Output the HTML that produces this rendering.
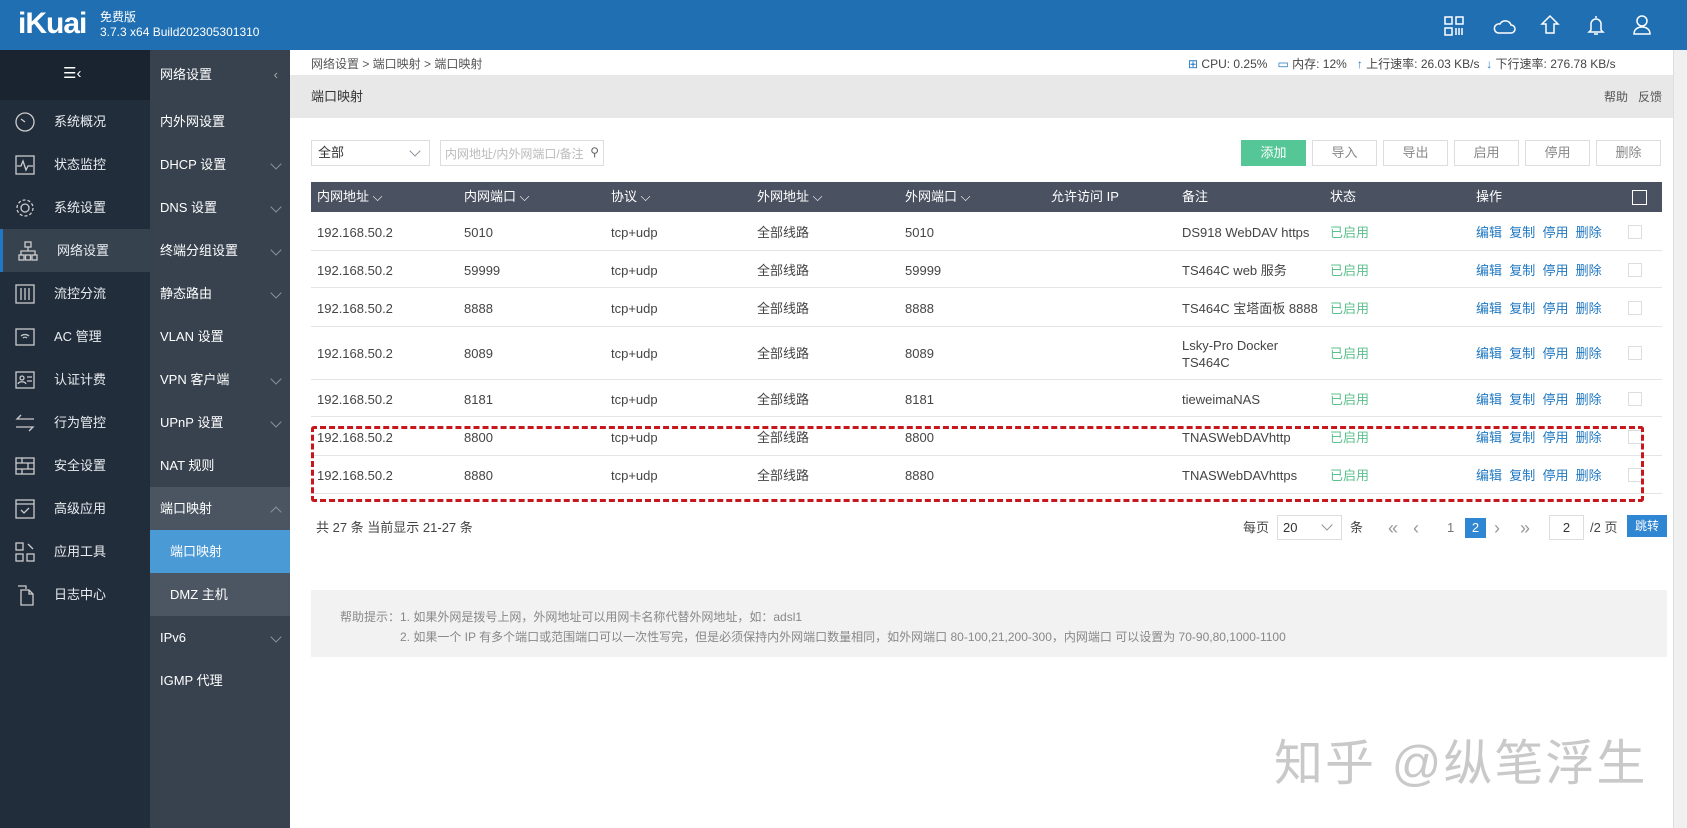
<!DOCTYPE html>
<html><head><meta charset="utf-8"><style>
*{margin:0;padding:0;box-sizing:border-box}
body{width:1687px;height:828px;overflow:hidden;font-family:"Liberation Sans","Noto Sans CJK SC",sans-serif;font-size:13px;line-height:16px;color:#333;background:#fff;position:relative}
.a{position:absolute;white-space:nowrap}
#hd{left:0;top:0;width:1687px;height:50px;background:#1f6fb2;color:#fff}
#s1{left:0;top:50px;width:150px;height:778px;background:#222d3b}
#s2{left:150px;top:50px;width:140px;height:778px;background:#38424e}
.i1{position:absolute;left:0;width:150px;height:43px;color:#e8ecf0;font-size:13px;line-height:43px;padding-left:54px}
.i1 svg{position:absolute;left:14px;top:11px}
.i2{position:absolute;left:0;width:140px;height:43px;color:#fff;font-size:13px;line-height:43px;padding-left:10px}
.chev{position:absolute;right:10px;top:17px;width:8px;height:8px;border-right:1px solid #8a939d;border-bottom:1px solid #8a939d;transform:rotate(45deg)}
.btn{position:absolute;top:140px;width:65px;height:26px;border:1px solid #ddd;background:#fff;color:#888;text-align:center;line-height:24px}
.th{position:absolute;top:182px;height:30px;line-height:30px;color:#fff;font-size:13px}
.row{position:absolute;left:311px;width:1351px;border-bottom:1px solid #e4e4e4}
.c{position:absolute;font-size:13px;line-height:16px;color:#444}
.g{color:#5cc08c}.b{color:#1f78c1}
.cb{position:absolute;left:1628px;width:14px;height:14px;border:1px solid #ddd;background:#fff}
</style></head><body>
<div class="a" id="hd">
 <div class="a" style="left:18px;top:6px;font-size:30px;line-height:36px;font-weight:bold;letter-spacing:-1px">iKuai</div>
 <div class="a" style="left:100px;top:10px;font-size:12px;line-height:15px">免费版<br>3.7.3 x64 Build202305301310</div>
 <svg class="a" style="left:1444px;top:16px" width="20" height="20" fill="none" stroke="#fff" stroke-width="1.5"><rect x="1" y="1" width="7" height="7"/><rect x="12" y="1" width="7" height="7"/><rect x="1" y="12" width="7" height="7"/><path d="M12 12v7M15 12v7M18 12v7"/></svg>
 <svg class="a" style="left:1492px;top:16px" width="24" height="20" fill="none" stroke="#fff" stroke-width="1.5"><path d="M6 17h13a4 4 0 0 0 0-8 6 6 0 0 0-11-1 4.5 4.5 0 0 0-2 9z"/></svg>
 <svg class="a" style="left:1540px;top:14px" width="20" height="22" fill="none" stroke="#fff" stroke-width="1.5"><path d="M10 2L2 10h4v9h8v-9h4z"/></svg>
 <svg class="a" style="left:1586px;top:14px" width="20" height="22" fill="none" stroke="#fff" stroke-width="1.5"><path d="M10 2v2M5 16V10a5 5 0 0 1 10 0v6l2 2H3zM8 20h4"/></svg>
 <svg class="a" style="left:1632px;top:14px" width="20" height="22" fill="none" stroke="#fff" stroke-width="1.5"><circle cx="10" cy="7" r="5"/><path d="M2 20c0-5 4-7 8-7s8 2 8 7z"/></svg>
</div>
<div class="a" id="s1">
 <div class="a" style="left:0;top:0;width:150px;height:50px;background:#1a2430"></div>
 <div class="a" style="left:63px;top:15px;color:#fff;font-size:15px;line-height:18px">☰‹</div>
 <div class="i1" style="top:50px"><svg width="22" height="22" fill="none" stroke="#ccc" stroke-width="1.3"><circle cx="11" cy="11" r="9"/><path d="M11 11l-4 -3"/></svg>系统概况</div>
 <div class="i1" style="top:93px"><svg width="22" height="22" fill="none" stroke="#ccc" stroke-width="1.3"><rect x="2" y="2" width="18" height="18"/><path d="M3 12h4l2-5 3 9 2-4h5"/></svg>状态监控</div>
 <div class="i1" style="top:136px"><svg width="22" height="22" fill="none" stroke="#ccc" stroke-width="1.3"><circle cx="11" cy="11" r="4"/><circle cx="11" cy="11" r="8" stroke-dasharray="3 2"/></svg>系统设置</div>
 <div class="i1" style="top:179px;background:#37424f;border-left:3px solid #1f78c1"><svg width="22" height="22" fill="none" stroke="#ccc" stroke-width="1.3"><rect x="8" y="2" width="6" height="5"/><rect x="2" y="15" width="5" height="5"/><rect x="8.5" y="15" width="5" height="5"/><rect x="15" y="15" width="5" height="5"/><path d="M11 7v4M4 15v-4h14v4"/></svg>网络设置</div>
 <div class="i1" style="top:222px"><svg width="22" height="22" fill="none" stroke="#ccc" stroke-width="1.3"><rect x="2" y="2" width="18" height="18"/><path d="M7 5v12M11 5v12M15 5v12"/></svg>流控分流</div>
 <div class="i1" style="top:265px"><svg width="22" height="22" fill="none" stroke="#ccc" stroke-width="1.3"><rect x="2" y="3" width="18" height="16"/><path d="M7 10a6 6 0 0 1 8 0M9 12a3 3 0 0 1 4 0"/></svg>AC 管理</div>
 <div class="i1" style="top:308px"><svg width="22" height="22" fill="none" stroke="#ccc" stroke-width="1.3"><rect x="2" y="3" width="18" height="16"/><circle cx="8" cy="9" r="2"/><path d="M4 15c1-3 7-3 8 0M13 8h5M13 12h5"/></svg>认证计费</div>
 <div class="i1" style="top:351px"><svg width="22" height="22" fill="none" stroke="#ccc" stroke-width="1.3"><path d="M20 7H3l4-4M2 15h17l-4 4"/></svg>行为管控</div>
 <div class="i1" style="top:394px"><svg width="22" height="22" fill="none" stroke="#ccc" stroke-width="1.3"><rect x="2" y="3" width="18" height="16"/><path d="M2 8h18M2 14h18M8 3v5M14 8v6M8 14v5"/></svg>安全设置</div>
 <div class="i1" style="top:437px"><svg width="22" height="22" fill="none" stroke="#ccc" stroke-width="1.3"><rect x="2" y="2" width="18" height="18"/><path d="M2 6h18M7 12l3 3 5-5"/></svg>高级应用</div>
 <div class="i1" style="top:480px"><svg width="22" height="22" fill="none" stroke="#ccc" stroke-width="1.3"><rect x="2" y="2" width="7" height="7"/><rect x="2" y="13" width="7" height="7"/><rect x="13" y="13" width="7" height="7"/><path d="M14 3l5 5"/></svg>应用工具</div>
 <div class="i1" style="top:523px"><svg width="22" height="22" fill="none" stroke="#ccc" stroke-width="1.3"><path d="M4 2h8v3M7 6h8l4 4v11H7zM15 6v4h4"/></svg>日志中心</div>
</div>
<div class="a" id="s2">
 <div class="i2" style="top:0;height:50px;line-height:50px">网络设置<span style="position:absolute;right:12px;color:#aaa">‹</span></div>
 <div class="i2" style="top:50px">内外网设置</div>
 <div class="i2" style="top:93px">DHCP 设置<i class="chev"></i></div>
 <div class="i2" style="top:136px">DNS 设置<i class="chev"></i></div>
 <div class="i2" style="top:179px">终端分组设置<i class="chev"></i></div>
 <div class="i2" style="top:222px">静态路由<i class="chev"></i></div>
 <div class="i2" style="top:265px">VLAN 设置</div>
 <div class="i2" style="top:308px">VPN 客户端<i class="chev"></i></div>
 <div class="i2" style="top:351px">UPnP 设置<i class="chev"></i></div>
 <div class="i2" style="top:394px">NAT 规则</div>
 <div class="i2" style="top:437px;background:#4b5561">端口映射<i class="chev" style="transform:rotate(-135deg);top:21px"></i></div>
 <div class="i2" style="top:480px;background:#4a9ad6;padding-left:20px">端口映射</div>
 <div class="i2" style="top:523px;background:#4c5662;padding-left:20px">DMZ 主机</div>
 <div class="i2" style="top:566px">IPv6<i class="chev"></i></div>
 <div class="i2" style="top:609px">IGMP 代理</div>
</div>
<div class="a" style="left:1673px;top:50px;width:14px;height:778px;background:#f0f0f0;border-left:1px solid #ddd"></div>
<div class="a" style="left:311px;top:56px;font-size:12px;color:#555">网络设置 &gt; 端口映射 &gt; 端口映射</div>
<div class="a" style="left:1188px;top:56px;font-size:12px;color:#444"><span style="color:#1f78c1">⊞</span> CPU: 0.25% &nbsp; <span style="color:#1f78c1">▭</span> 内存: 12% &nbsp; <span style="color:#1f78c1">↑</span> 上行速率: 26.03 KB/s &nbsp;<span style="color:#1f78c1">↓</span> 下行速率: 276.78 KB/s</div>
<div class="a" style="left:290px;top:75px;width:1383px;height:43px;background:#e8e8e8"></div>
<div class="a" style="left:311px;top:89px;font-size:13px">端口映射</div>
<div class="a" style="left:1604px;top:89px;font-size:12px;color:#555">帮助 &nbsp; 反馈</div>
<div class="a" style="left:311px;top:140px;width:119px;height:26px;border:1px solid #ddd;padding:4px 6px">全部<i class="chev" style="top:6px;right:10px"></i></div>
<div class="a" style="left:440px;top:140px;width:164px;height:26px;border:1px solid #ddd;padding:5px 4px;color:#bbb;font-size:12px;overflow:hidden">内网地址/内外网端口/备注<span style="position:absolute;right:4px;top:3px;color:#666">⚲</span></div>
<div class="btn" style="left:1241px;background:#55c796;border-color:#55c796;color:#fff">添加</div>
<div class="btn" style="left:1312px">导入</div>
<div class="btn" style="left:1383px">导出</div>
<div class="btn" style="left:1454px">启用</div>
<div class="btn" style="left:1525px">停用</div>
<div class="btn" style="left:1596px">删除</div>
<div class="a" style="left:311px;top:182px;width:1351px;height:30px;background:#4a5160"></div>
<div class="th" style="left:317px">内网地址 ⌵</div><div class="th" style="left:464px">内网端口 ⌵</div><div class="th" style="left:611px">协议 ⌵</div><div class="th" style="left:757px">外网地址 ⌵</div><div class="th" style="left:905px">外网端口 ⌵</div><div class="th" style="left:1051px">允许访问 IP</div><div class="th" style="left:1182px">备注</div><div class="th" style="left:1330px">状态</div><div class="th" style="left:1476px">操作</div>
<div class="a" style="left:1632px;top:190px;width:15px;height:15px;border:1px solid #fff"></div>
<div class="row" style="top:212px;height:39px"></div>
<div class="row" style="top:251px;height:37px"></div>
<div class="row" style="top:288px;height:39px"></div>
<div class="row" style="top:327px;height:53px"></div>
<div class="row" style="top:380px;height:37px"></div>
<div class="row" style="top:417px;height:39px"></div>
<div class="row" style="top:456px;height:38px"></div>
<div class="c" style="top:225px;left:317px">192.168.50.2</div><div class="c" style="top:225px;left:464px">5010</div><div class="c" style="top:225px;left:611px">tcp+udp</div><div class="c" style="top:225px;left:757px">全部线路</div><div class="c" style="top:225px;left:905px">5010</div><div class="c" style="top:225px;left:1182px">DS918 WebDAV https</div><div class="c g" style="top:225px;left:1330px">已启用</div><div class="c b" style="top:225px;left:1476px">编辑 &nbsp;复制 &nbsp;停用 &nbsp;删除</div><div class="cb" style="top:225px"></div>
<div class="c" style="top:263px;left:317px">192.168.50.2</div><div class="c" style="top:263px;left:464px">59999</div><div class="c" style="top:263px;left:611px">tcp+udp</div><div class="c" style="top:263px;left:757px">全部线路</div><div class="c" style="top:263px;left:905px">59999</div><div class="c" style="top:263px;left:1182px">TS464C web 服务</div><div class="c g" style="top:263px;left:1330px">已启用</div><div class="c b" style="top:263px;left:1476px">编辑 &nbsp;复制 &nbsp;停用 &nbsp;删除</div><div class="cb" style="top:263px"></div>
<div class="c" style="top:301px;left:317px">192.168.50.2</div><div class="c" style="top:301px;left:464px">8888</div><div class="c" style="top:301px;left:611px">tcp+udp</div><div class="c" style="top:301px;left:757px">全部线路</div><div class="c" style="top:301px;left:905px">8888</div><div class="c" style="top:301px;left:1182px">TS464C 宝塔面板 8888</div><div class="c g" style="top:301px;left:1330px">已启用</div><div class="c b" style="top:301px;left:1476px">编辑 &nbsp;复制 &nbsp;停用 &nbsp;删除</div><div class="cb" style="top:301px"></div>
<div class="c" style="top:346px;left:317px">192.168.50.2</div><div class="c" style="top:346px;left:464px">8089</div><div class="c" style="top:346px;left:611px">tcp+udp</div><div class="c" style="top:346px;left:757px">全部线路</div><div class="c" style="top:346px;left:905px">8089</div><div class="c" style="top:337px;left:1182px;line-height:17px">Lsky-Pro Docker<br>TS464C</div><div class="c g" style="top:346px;left:1330px">已启用</div><div class="c b" style="top:346px;left:1476px">编辑 &nbsp;复制 &nbsp;停用 &nbsp;删除</div><div class="cb" style="top:346px"></div>
<div class="c" style="top:392px;left:317px">192.168.50.2</div><div class="c" style="top:392px;left:464px">8181</div><div class="c" style="top:392px;left:611px">tcp+udp</div><div class="c" style="top:392px;left:757px">全部线路</div><div class="c" style="top:392px;left:905px">8181</div><div class="c" style="top:392px;left:1182px">tieweimaNAS</div><div class="c g" style="top:392px;left:1330px">已启用</div><div class="c b" style="top:392px;left:1476px">编辑 &nbsp;复制 &nbsp;停用 &nbsp;删除</div><div class="cb" style="top:392px"></div>
<div class="c" style="top:430px;left:317px">192.168.50.2</div><div class="c" style="top:430px;left:464px">8800</div><div class="c" style="top:430px;left:611px">tcp+udp</div><div class="c" style="top:430px;left:757px">全部线路</div><div class="c" style="top:430px;left:905px">8800</div><div class="c" style="top:430px;left:1182px">TNASWebDAVhttp</div><div class="c g" style="top:430px;left:1330px">已启用</div><div class="c b" style="top:430px;left:1476px">编辑 &nbsp;复制 &nbsp;停用 &nbsp;删除</div><div class="cb" style="top:430px"></div>
<div class="c" style="top:468px;left:317px">192.168.50.2</div><div class="c" style="top:468px;left:464px">8880</div><div class="c" style="top:468px;left:611px">tcp+udp</div><div class="c" style="top:468px;left:757px">全部线路</div><div class="c" style="top:468px;left:905px">8880</div><div class="c" style="top:468px;left:1182px">TNASWebDAVhttps</div><div class="c g" style="top:468px;left:1330px">已启用</div><div class="c b" style="top:468px;left:1476px">编辑 &nbsp;复制 &nbsp;停用 &nbsp;删除</div><div class="cb" style="top:468px"></div>
<div class="a" style="left:311px;top:426px;width:1333px;height:76px;border:3px dashed #c8161d;border-radius:3px"></div>
<div class="a" style="left:316px;top:520px;color:#444">共 27 条 当前显示 21-27 条</div>
<div class="a" style="left:1243px;top:520px;color:#444">每页</div>
<div class="a" style="left:1277px;top:515px;width:65px;height:25px;border:1px solid #ddd;padding:4px 5px">20<i class="chev" style="top:5px"></i></div>
<div class="a" style="left:1350px;top:520px;color:#444">条</div>
<div class="a" style="left:1388px;top:518px;color:#999;font-size:18px;line-height:20px">«&nbsp;&nbsp; ‹</div>
<div class="a" style="left:1447px;top:520px;color:#777">1</div>
<div class="a" style="left:1465px;top:518px;width:21px;height:20px;background:#2f86d3;color:#fff;text-align:center;line-height:20px">2</div>
<div class="a" style="left:1494px;top:518px;color:#999;font-size:18px;line-height:20px">›&nbsp;&nbsp;&nbsp; »</div>
<div class="a" style="left:1549px;top:515px;width:35px;height:25px;border:1px solid #ddd;text-align:center;line-height:23px">2</div>
<div class="a" style="left:1590px;top:520px;color:#444">/2 页</div>
<div class="a" style="left:1627px;top:515px;width:40px;height:22px;background:#2f86d3;color:#fff;text-align:center;line-height:22px;font-size:12px">跳转</div>
<div class="a" style="left:311px;top:590px;width:1356px;height:67px;background:#f2f2f2"></div>
<div class="a" style="left:340px;top:607px;font-size:12px;color:#888;line-height:20px">帮助提示：1. 如果外网是拨号上网，外网地址可以用网卡名称代替外网地址，如：adsl1<br><span style="padding-left:60px">2. 如果一个 IP 有多个端口或范围端口可以一次性写完，但是必须保持内外网端口数量相同，如外网端口 80-100,21,200-300，内网端口 可以设置为 70-90,80,1000-1100</span></div>
<div class="a" style="left:1274px;top:736px;font-size:49px;line-height:56px;color:#c9c9c9;letter-spacing:2px">知乎 @纵笔浮生</div>
</body></html>
